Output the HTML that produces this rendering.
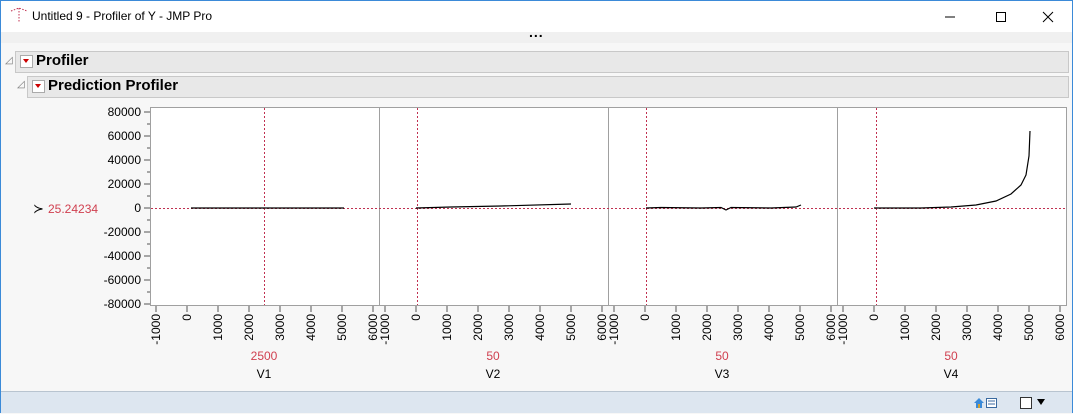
<!DOCTYPE html>
<html><head><style>
body{margin:0;width:1073px;height:413px;overflow:hidden;font-family:"Segoe UI","Liberation Sans",sans-serif;background:#f7f7f7;position:relative}
.win{position:absolute;left:0;top:0;width:1071px;height:411px;border:1px solid #3b8ad8;background:#f7f7f7}
.title{position:absolute;left:0;top:0;width:1071px;height:31px;background:#fff}
.title span{position:absolute;left:31px;top:8px;font-size:12px;color:#000}
.band{position:absolute;left:0;top:31px;width:1071px;height:11px;background:#f0f0f0}
.hdr{position:absolute;height:20px;background:#e8e8e8;border:1px solid #c8c8c8;font-weight:bold;font-size:15px}
.tri{position:absolute;font-size:10px;color:#777}
.btn{position:absolute;width:11px;height:11px;background:#fff;border:1px solid #aaa;top:3px}
.btn:after{content:"";position:absolute;left:2px;top:3px;border-left:3.5px solid transparent;border-right:3.5px solid transparent;border-top:4px solid #c00}
.status{position:absolute;left:0;top:390px;width:1071px;height:21px;background:#dde6f0;border-top:1px solid #b8c4d0}
</style></head><body>
<div class="win">
<div class="title"><svg style="position:absolute;left:8px;top:6px" width="20" height="16"><path d="M2 4 L10 1 L18 4 M10 1 V15" stroke="#c03050" stroke-width="1" fill="none" stroke-dasharray="1.5 1.5"/></svg><span>Untitled 9 - Profiler of Y - JMP Pro</span>
<svg style="position:absolute;left:940px;top:8px" width="120" height="16"><path d="M4 8 H14" stroke="#000"/><rect x="55.5" y="3.5" width="9" height="9" fill="none" stroke="#000"/><path d="M102 3 L112 13 M112 3 L102 13" stroke="#000"/></svg></div>
<div class="band"><span style="position:absolute;left:528px;top:-8px;font-size:14px;font-weight:bold;letter-spacing:1px">...</span></div>
<span class="tri" style="left:4px;top:54px">◿</span>
<div class="hdr" style="left:14px;top:50px;width:1052px"><div class="btn" style="left:4px"></div><span style="position:absolute;left:20px;top:0px">Profiler</span></div>
<span class="tri" style="left:16px;top:78px">◿</span>
<div class="hdr" style="left:26px;top:75px;width:1040px"><div class="btn" style="left:4px"></div><span style="position:absolute;left:20px;top:0px">Prediction Profiler</span></div>
<svg style="position:absolute;left:0;top:0" width="1073" height="413" font-family="Segoe UI, Liberation Sans, sans-serif" font-size="12">
<rect x="149.5" y="106.5" width="916" height="198" fill="#fff" stroke="#a0a0a0"/>
<path d="M378.5 106 V305 M607.5 106 V305 M836.5 106 V305" stroke="#a0a0a0"/>
<g stroke="#555"><path d="M143 111H149M143 135H149M143 159H149M143 183H149M143 207H149M143 231H149M143 255H149M143 279H149M143 303H149"/><path d="M146 123H149M146 147H149M146 171H149M146 195H149M146 219H149M146 243H149M146 267H149M146 291H149"/></g>
<g text-anchor="end" fill="#000"><text x="140" y="115">80000</text><text x="140" y="139">60000</text><text x="140" y="163">40000</text><text x="140" y="187">20000</text><text x="140" y="211">0</text><text x="140" y="235">-20000</text><text x="140" y="259">-40000</text><text x="140" y="283">-60000</text><text x="140" y="307">-80000</text></g>
<text x="32" y="212" font-size="13">≻</text><text x="47" y="212" fill="#d04050">25.24234</text>
<g stroke="#c03050" stroke-dasharray="2 2"><path d="M150 207.5H1065"/><path d="M263.5 107V304M416.5 107V304M645.5 107V304M875.5 107V304"/></g>
<g stroke="#000" fill="none" stroke-width="1.2">
<path d="M190 207H343"/>
<path d="M415 207 L450 206 L500 205 L570 203"/>
<path d="M645 207 L660 206.5 L700 207 L720 206.5 L725 209 L730 206.5 L770 207 L795 206 L800 204"/>
<path d="M873 207 L920 207 L950 206 L975 204 L995 200 L1010 193 L1020 184 L1025 174 L1028 155 L1029 130"/>
</g>
<g id="ax">
<path d="M155 305V311M186 305V311M217 305V311M248 305V311M279 305V311M310 305V311M341 305V311M372 305V311" stroke="#555"/>
<g text-anchor="end"><text transform="translate(159,313) rotate(-90)">-1000</text><text transform="translate(190,313) rotate(-90)">0</text><text transform="translate(221,313) rotate(-90)">1000</text><text transform="translate(252,313) rotate(-90)">2000</text><text transform="translate(283,313) rotate(-90)">3000</text><text transform="translate(314,313) rotate(-90)">4000</text><text transform="translate(345,313) rotate(-90)">5000</text><text transform="translate(376,313) rotate(-90)">6000</text></g>
</g>
<use href="#ax" x="229"/><use href="#ax" x="458"/><use href="#ax" x="687"/>
<g text-anchor="middle"><text x="263" y="359" fill="#d04050">2500</text><text x="263" y="377">V1</text>
<text x="492" y="359" fill="#d04050">50</text><text x="492" y="377">V2</text>
<text x="721" y="359" fill="#d04050">50</text><text x="721" y="377">V3</text>
<text x="950" y="359" fill="#d04050">50</text><text x="950" y="377">V4</text></g>
</svg>
<div class="status"><svg style="position:absolute;left:972px;top:3px" width="90" height="16"><path d="M6 3 L1 8 H3 V13 H9 V8 H11 Z" fill="#3b8ad8"/><rect x="5" y="9" width="2" height="4" fill="#d0a030"/><rect x="13.5" y="3.5" width="10" height="9" fill="#fff" stroke="#3b6aa0"/><path d="M15 6H22M15 9H22" stroke="#3b6aa0"/><rect x="47.5" y="2.5" width="11" height="11" fill="#fff" stroke="#333"/><path d="M64 4 H72 L68 10Z" fill="#000"/></svg></div>
</div>
</body></html>
